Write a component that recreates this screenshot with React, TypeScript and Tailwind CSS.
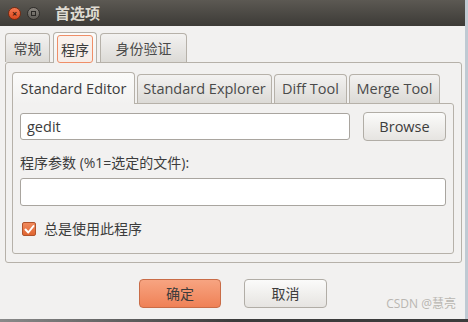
import React from 'react';

const font = { fontFamily: '"Open Sans", "Noto Sans CJK SC", sans-serif' };

function OuterTab({ label, active, width }: { label: string; active?: boolean; width: string }) {
  if (active) {
    return (
      <div className={`${width} h-[31px] -mb-px relative z-10 rounded-t-[4px] border border-b-0 border-[#b6b1a9] bg-gradient-to-b from-[#fbfbfa] to-[#f2f1f0] px-[3px] pt-[2px]`}>
        <div className="h-[28px] rounded-[3px] border border-[#ef8e68] bg-[#f9e6dc]/40 flex items-center justify-center text-[14px] text-[#3c3c3c]">
          {label}
        </div>
      </div>
    );
  }
  return (
    <div className={`${width} h-[29px] rounded-t-[4px] border border-b-0 border-[#b6b1a9] bg-gradient-to-b from-[#f3f2f1] to-[#dcdad6] flex items-center justify-center text-[14px] text-[#4a4a4a]`}>
      {label}
    </div>
  );
}

function InnerTab({ label, active, width }: { label: string; active?: boolean; width: string }) {
  return (
    <div
      className={`${width} ${
        active
          ? 'h-[32px] -mb-px relative z-10 bg-gradient-to-b from-[#fbfbfa] to-[#f2f1f0] text-[#3c3c3c]'
          : 'h-[29px] bg-gradient-to-b from-[#f3f2f1] to-[#dcdad6] text-[#4a4a4a]'
      } rounded-t-[4px] border border-b-0 border-[#b6b1a9] flex items-center justify-center text-[14.5px]`}
    >
      {label}
    </div>
  );
}

export default function App() {
  return (
    <div className="w-[468px] h-[322px] overflow-hidden bg-[#bfcad3] relative" style={font}>
      <div className="w-[465px] h-[319px] flex flex-col bg-[#f2f1f0]">
        {/* title bar */}
        <div className="h-[26px] shrink-0 bg-gradient-to-b from-[#5c5953] to-[#3d3b37] flex items-center pl-[8px]">
          <div className="w-[13px] h-[13px] rounded-full bg-gradient-to-b from-[#f47a52] to-[#d9471c] border border-[#7a2a10] flex items-center justify-center text-[9px] leading-none text-[#3b1a0c] font-bold">
            ×
          </div>
          <div className="ml-[6px] w-[13px] h-[13px] rounded-full bg-gradient-to-b from-[#8a8680] to-[#5e5b56] border border-[#2f2d2a] flex items-center justify-center">
            <div className="w-[5px] h-[5px] border border-[#2a2826]" />
          </div>
          <span className="ml-[15px] text-[15px] font-bold text-[#dfdbd2]">首选项</span>
        </div>

        {/* body */}
        <div className="flex-1 flex flex-col px-[5px] pt-[6px]">
          <div className="flex items-end gap-[3px] h-[30px]">
            <OuterTab label="常规" width="w-[45px]" />
            <OuterTab label="程序" width="w-[44px]" active />
            <OuterTab label="身份验证" width="w-[87px]" />
          </div>

          <div className="w-[457px] h-[201px] rounded-[3px] border border-[#b6b1a9] px-[6px] pt-[9px]">
            <div className="flex items-end gap-[2px] h-[31px]">
              <InnerTab label="Standard Editor" width="w-[123px]" active />
              <InnerTab label="Standard Explorer" width="w-[135px]" />
              <InnerTab label="Diff Tool" width="w-[73px]" />
              <InnerTab label="Merge Tool" width="w-[91px]" />
            </div>
            <div className="w-[442px] h-[151px] rounded-[3px] rounded-tl-none border border-[#b6b1a9] px-[7px] pt-[8px] text-[#3c3c3c]">
              <div className="flex items-center gap-[13px]">
                <div className="w-[330px] h-[27px] rounded-[3px] border border-[#a9a59f] bg-white flex items-center px-[6px] text-[14.5px]">
                  gedit
                </div>
                <div className="w-[83px] h-[29px] rounded-[4px] border border-[#b1ada6] bg-gradient-to-b from-[#fbfbfa] to-[#e6e4e1] flex items-center justify-center text-[14.5px]">
                  Browse
                </div>
              </div>
              <div className="mt-[12px] text-[14px] leading-[20px]">程序参数 (%1=选定的文件):</div>
              <div className="mt-[5px] w-[426px] h-[28px] rounded-[3px] border border-[#a9a59f] bg-white" />
              <div className="mt-[13px] h-[20px] flex items-center pl-[2px]">
                <div className="w-[14px] h-[14px] rounded-[2px] border border-[#b0532c] bg-gradient-to-b from-[#f08a5d] to-[#e0652f] flex items-center justify-center">
                  <svg width="11" height="11" viewBox="0 0 11 11">
                    <path d="M1.5 5.5 L4.3 8.5 L9.5 2" fill="none" stroke="#ffffff" strokeWidth="2" strokeLinecap="round" strokeLinejoin="round" />
                  </svg>
                </div>
                <span className="ml-[8px] text-[14px] leading-[20px]">总是使用此程序</span>
              </div>
            </div>
          </div>

          <div className="flex justify-center gap-[23px] mt-[16px] pl-[1px]">
            <div className="w-[82px] h-[29px] rounded-[4px] border border-[#c96c47] bg-gradient-to-b from-[#f7a481] to-[#ef8156] flex items-center justify-center text-[14px] text-[#3c3c3c]">
              确定
            </div>
            <div className="w-[83px] h-[29px] rounded-[4px] border border-[#b1ada6] bg-gradient-to-b from-[#fbfbfa] to-[#e6e4e1] flex items-center justify-center text-[14px] text-[#3c3c3c]">
              取消
            </div>
          </div>
        </div>
      </div>
      <div className="absolute left-0 right-0 bottom-0 h-[3px] bg-gradient-to-r from-[#8a8a8a] via-[#3c3c3c] to-[#3c3c3c]" />
      <div className="absolute right-[12px] bottom-[9px] text-[12px] text-[#b9b6b1]">CSDN @慧亮</div>
    </div>
  );
}
